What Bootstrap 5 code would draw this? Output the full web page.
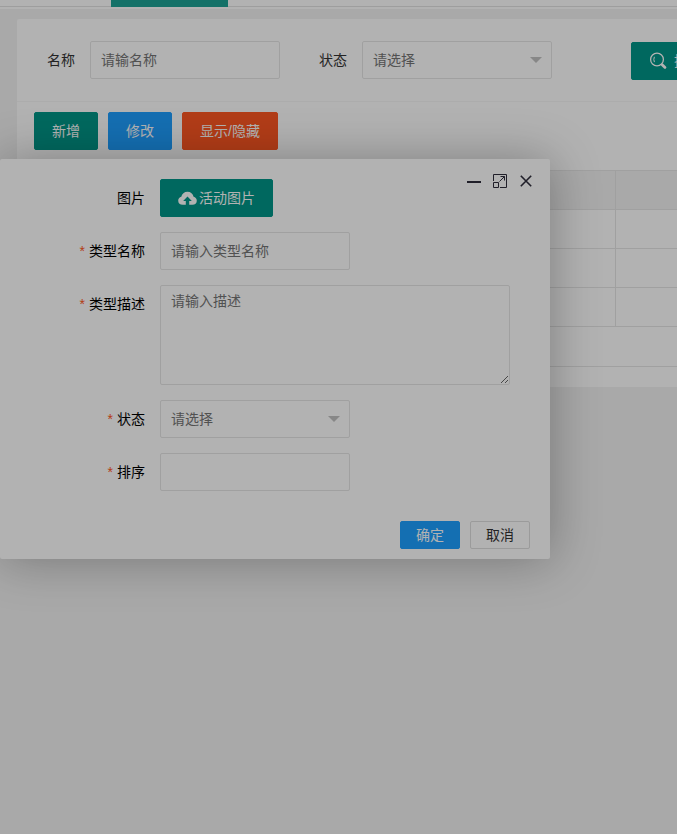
<!DOCTYPE html>
<html lang="zh-CN">
<head>
<meta charset="utf-8">
<meta name="viewport" content="width=device-width, initial-scale=1">
<title>类型管理</title>
<link href="https://cdn.jsdelivr.net/npm/bootstrap@5.3.0/dist/css/bootstrap.min.css" rel="stylesheet">
<style>
  body { background: #f2f2f2; color: #333; font: 14px/24px "Liberation Sans", "Noto Sans CJK SC", sans-serif; height: 834px; }
  .tabs-bar { height: 9px; padding-left: 111px; background: linear-gradient(#fff 6px, #e2e2e2 6px, #e2e2e2 7px, #fff 7px); }
  .tab-current { width: 117px; height: 7px; background: #1da396; }
  .panel { height: 368px; margin: 10px 0 0 17px; border-radius: 2px 0 0 2px; }
  .filters { height: 83px; padding: 22px 0 0 30px; border-bottom: 1px solid #f6f6f6; }
  .filters .field-label { margin-right: 15px; }
  .filters .second { margin-left: 39px; }
  .search { margin: 1px 0 0 79px; gap: 7px; }
  .tools { padding: 10px 17px 20px; gap: 10px; }
  .btn { --bs-btn-border-radius: 2px; --bs-btn-font-size: 14px; --bs-btn-line-height: 36px; --bs-btn-padding-y: 0; --bs-btn-padding-x: 17px; height: 38px; white-space: nowrap; }
  .btn-teal { --bs-btn-bg: #009688; --bs-btn-color: #fff; --bs-btn-border-color: #009688; }
  .btn-azure { --bs-btn-bg: #1e9fff; --bs-btn-color: #fff; --bs-btn-border-color: #1e9fff; }
  .btn-flame { --bs-btn-bg: #ff5722; --bs-btn-color: #fff; --bs-btn-border-color: #ff5722; }
  .btn-plain { --bs-btn-bg: #fff; --bs-btn-color: #333; --bs-btn-border-color: #dedede; }
  .btn-short { --bs-btn-line-height: 28px; --bs-btn-padding-x: 15px; height: 28px; }
  .upload { gap: 2px; }
  .form-control { width: 190px; height: 38px; padding: 0 10px; border-color: #e6e6e6; border-radius: 2px; font-size: 14px; line-height: 36px; }
  .form-control::placeholder { color: #757575; opacity: 1; }
  textarea.form-control { width: 350px; height: 100px; min-height: 100px; padding: 5px 10px; line-height: 20px; resize: vertical; }
  .picker { color: #757575; }
  .caret { width: 12px; height: 6px; background: #c2c2c2; clip-path: polygon(0 0, 100% 0, 50% 100%); margin-right: -1px; }
  .data-wrap { margin-left: 17px; }
  .data-table { --bs-table-bg: #fff; width: 866px; height: 157px; margin: 0; table-layout: fixed; border-color: #e6e6e6; }
  .data-table th, .data-table td { height: 39px; padding: 0; }
  .data-table th { --bs-table-bg: #f2f2f2; }
  .col-first { width: 581px; }
  .pager { height: 40px; border: solid #e6e6e6; border-width: 0 0 1px 1px; }
  .dialog-box { position: absolute; left: 0; top: 159px; width: 550px; height: 400px; padding: 20px 20px 10px 50px; border-radius: 2px; box-shadow: 1px 1px 50px rgba(0,0,0,.3); color: #000; }
  .dialog-form { gap: 15px; }
  .dialog-actions { gap: 10px; }
  .dialog-box .field-label { width: 95px; padding: 7px 0; margin-right: 15px; text-align: right; }
  .req { color: #ff5722; margin-right: 4px; }
  .window-tools { position: absolute; right: 15px; top: 13px; color: #2e2d3c; }
  .shade { position: fixed; inset: 0; background: rgba(0,0,0,.3); pointer-events: none; }
</style>
<script src="https://cdn.jsdelivr.net/npm/bootstrap@5.3.0/dist/js/bootstrap.bundle.min.js"></script>
</head>
<body class="overflow-hidden">
<div class="tabs-bar"><div class="tab-current"></div></div>
<main class="panel bg-white overflow-hidden">
  <form class="filters d-flex align-items-start">
    <label class="field-label py-2 lh-1 mt-1 flex-shrink-0">名称</label>
    <input class="form-control flex-shrink-0" placeholder="请输名称">
    <label class="field-label second py-2 lh-1 mt-1 flex-shrink-0">状态</label>
    <div class="form-control picker d-flex align-items-center justify-content-between flex-shrink-0">请选择<span class="caret"></span></div>
    <button type="button" class="btn btn-teal search d-flex align-items-center flex-shrink-0"><svg width="18" height="18" viewBox="0 0 18 18" fill="none" stroke="currentColor"><circle cx="8" cy="7.5" r="6.4" stroke-width="1.3"/><path d="M5.4 4.8q-1.2 2.7 0 5.3" stroke-width="1"/><path d="m13.2 12.7 2.8 2.7" stroke-width="2.8" stroke-linecap="round"/></svg><span>搜索</span></button>
  </form>
  <div class="tools d-flex">
    <button class="btn btn-teal">新增</button>
    <button class="btn btn-azure">修改</button>
    <button class="btn btn-flame">显示/隐藏</button>
  </div>
  <div class="data-wrap overflow-hidden">
    <table class="table table-bordered data-table">
      <colgroup><col class="col-first"><col></colgroup>
      <thead><tr><th></th><th></th></tr></thead>
      <tbody><tr><td></td><td></td></tr><tr><td></td><td></td></tr><tr><td></td><td></td></tr></tbody>
    </table>
    <div class="pager"></div>
  </div>
</main>
<section class="dialog-box bg-white d-flex flex-column" role="dialog">
  <div class="window-tools d-flex gap-2">
    <svg width="18" height="18" viewBox="0 0 18 18"><path d="M2 10h14" stroke="currentColor" stroke-width="2"/></svg>
    <svg width="18" height="18" viewBox="0 0 18 18" fill="none" stroke="currentColor"><path d="M2.5 9V2.5h13v13H9M2.5 10.5h5v5h-5zM8.5 9.5l5-5M9.5 4.5h4v4"/></svg>
    <svg width="18" height="18" viewBox="0 0 18 18"><path d="m3.8 3.8 10.4 10.4m0-10.4L3.8 14.2" stroke="currentColor" stroke-width="1.6"/></svg>
  </div>
  <form class="dialog-form d-grid align-items-start">
    <div class="d-flex"><label class="field-label">图片</label><button type="button" class="btn btn-teal upload d-flex align-items-center"><svg width="19" height="16" viewBox="0 0 19 16"><path fill="currentColor" d="M7.8 14.8H4.7C2 14.8.2 13.1.2 10.7c0-2 1.2-3.5 3.1-4C3.9 3.7 6.3 1.7 9.5 1.7s5.5 2 6.1 5c1.9.5 3.2 2 3.2 4 0 2.4-1.8 4.1-4.4 4.1h-3.2v-3.9h2.6L9.5 6.4l-4.3 4.5h2.6z"/></svg><span>活动图片</span></button></div>
    <div class="d-flex"><label class="field-label"><span class="req">*</span>类型名称</label><input class="form-control" placeholder="请输入类型名称"></div>
    <div class="d-flex"><label class="field-label"><span class="req">*</span>类型描述</label><textarea class="form-control" placeholder="请输入描述"></textarea></div>
    <div class="d-flex"><label class="field-label"><span class="req">*</span>状态</label><div class="form-control picker d-flex align-items-center justify-content-between">请选择<span class="caret"></span></div></div>
    <div class="d-flex"><label class="field-label"><span class="req">*</span>排序</label><input class="form-control"></div>
  </form>
  <div class="dialog-actions d-flex justify-content-end mt-auto">
    <button class="btn btn-azure btn-short d-flex align-items-center">确定</button>
    <button class="btn btn-plain btn-short d-flex align-items-center">取消</button>
  </div>
</section>
<div class="shade"></div>
</body>
</html>
